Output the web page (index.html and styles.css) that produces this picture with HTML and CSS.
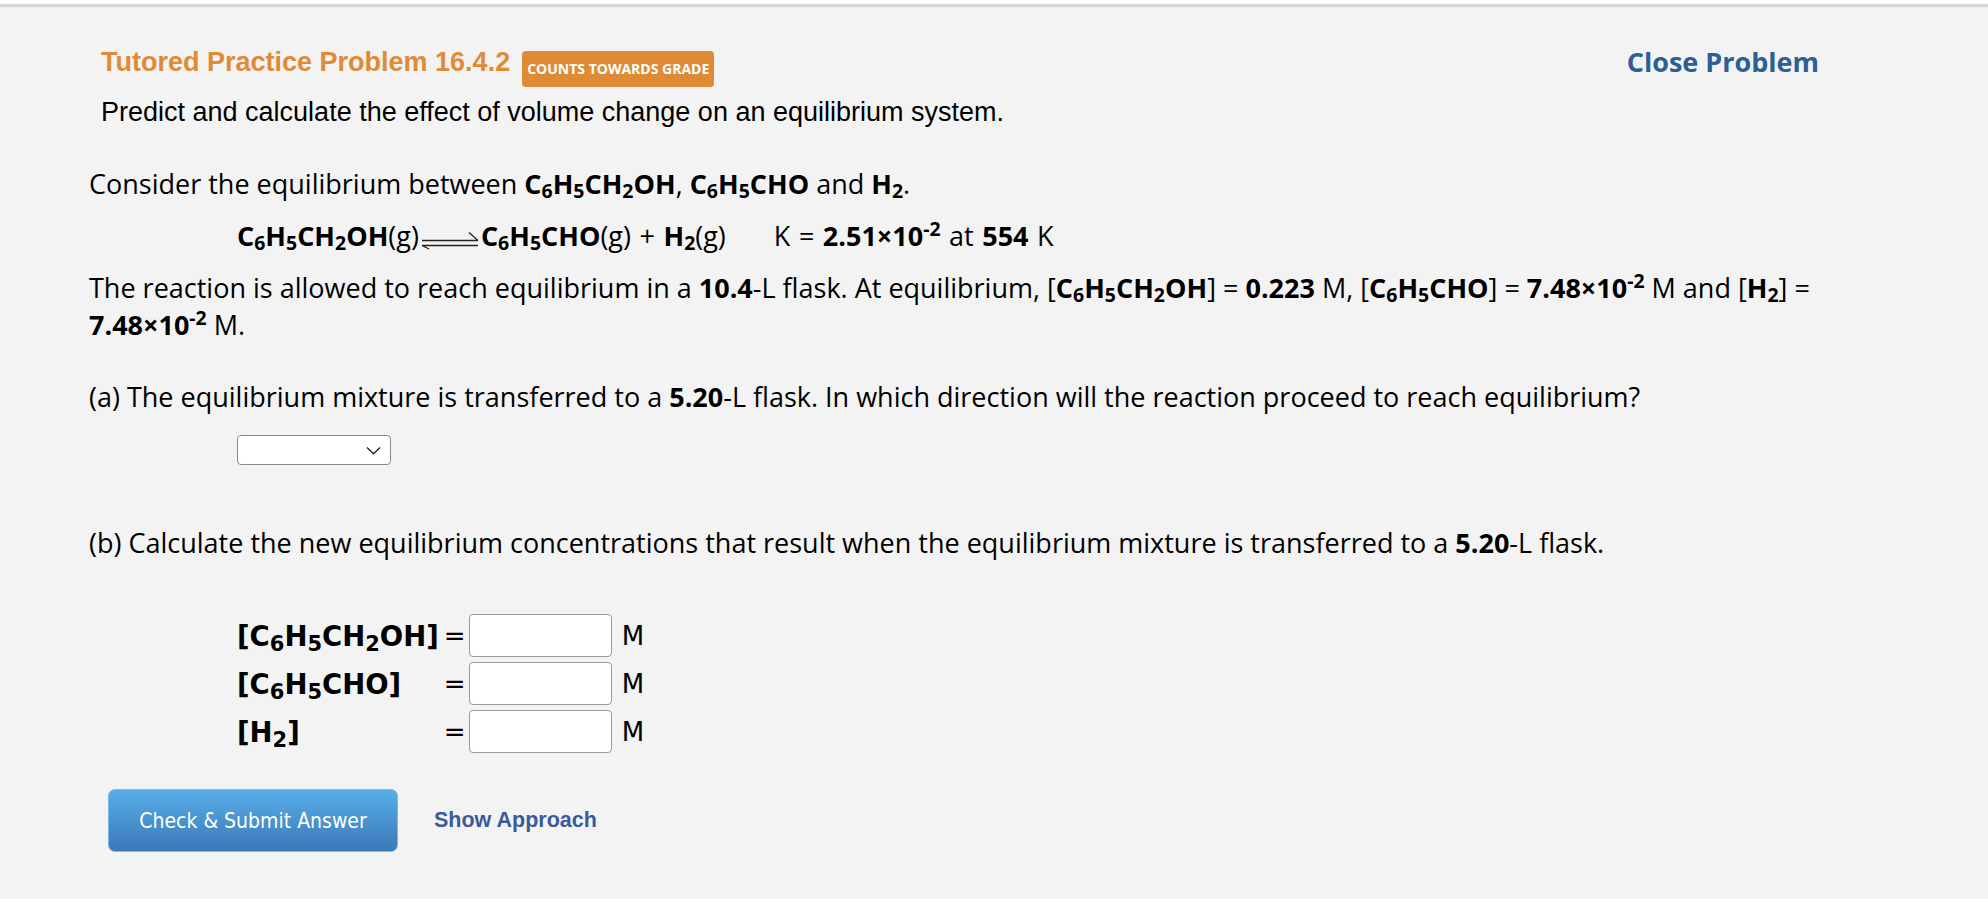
FILE: index.html
```html
<!DOCTYPE html>
<html lang="en">
<head>
<meta charset="utf-8">
<title>Tutored Practice Problem 16.4.2</title>
<link rel="stylesheet" href="styles.css">
</head>
<body>
<div class="page">
  <header class="head">
    <div class="head-left">
      <div class="title-row">
        <h1 class="title">Tutored Practice Problem 16.4.2</h1>
        <span class="badge">COUNTS TOWARDS GRADE</span>
      </div>
      <p class="subtitle">Predict and calculate the effect of volume change on an equilibrium system.</p>
    </div>
    <a class="close" href="#">Close Problem</a>
  </header>

  <main class="problem">
    <p class="text lead">Consider the equilibrium between <b>C<sub>6</sub>H<sub>5</sub>CH<sub>2</sub>OH</b>, <b>C<sub>6</sub>H<sub>5</sub>CHO</b> and <b>H<sub>2</sub></b>.</p>

    <p class="text eq"><b>C<sub>6</sub>H<sub>5</sub>CH<sub>2</sub>OH</b>(g)<svg class="arrow" width="60" height="20" viewBox="0 0 60 20" aria-hidden="true"><path d="M2 10.5H58M58 10.5L49 2.5M2 15.5H58M2 15.5L9 19" fill="none" stroke="#222" stroke-width="1.3"/></svg><b>C<sub>6</sub>H<sub>5</sub>CHO</b>(g) + <b>H<sub>2</sub></b>(g)<span class="k">K = <b>2.51×10<sup>-2</sup></b> at <b>554</b> K</span></p>

    <p class="text reaction">The reaction is allowed to reach equilibrium in a <b>10.4</b>-L flask. At equilibrium, [<b>C<sub>6</sub>H<sub>5</sub>CH<sub>2</sub>OH</b>] = <b>0.223</b> M, [<b>C<sub>6</sub>H<sub>5</sub>CHO</b>] = <b>7.48×10<sup>-2</sup></b> M and [<b>H<sub>2</sub></b>] = <b>7.48×10<sup>-2</sup></b> M.</p>

    <p class="text part-a">(a) The equilibrium mixture is transferred to a <b>5.20</b>-L flask. In which direction will the reaction proceed to reach equilibrium?</p>

    <div class="pick">
      <svg class="chev" width="15" height="9" viewBox="0 0 15 9" aria-hidden="true"><path d="M1 1.5L7.5 7.8L14 1.5" fill="none" stroke="#222" stroke-width="1.4"/></svg>
    </div>

    <p class="text part-b">(b) Calculate the new equilibrium concentrations that result when the equilibrium mixture is transferred to a <b>5.20</b>-L flask.</p>

    <div class="answers">
      <span class="lbl">[C<sub>6</sub>H<sub>5</sub>CH<sub>2</sub>OH]</span><span class="eqs">=</span><span class="box"></span><span class="unit">M</span>
      <span class="lbl">[C<sub>6</sub>H<sub>5</sub>CHO]</span><span class="eqs">=</span><span class="box"></span><span class="unit">M</span>
      <span class="lbl">[H<sub>2</sub>]</span><span class="eqs">=</span><span class="box"></span><span class="unit">M</span>
    </div>
  </main>

  <div class="actions">
    <button class="submit" type="button">Check &amp; Submit Answer</button>
    <a class="approach" href="#">Show Approach</a>
  </div>
</div>
</body>
</html>
```

FILE: styles.css
```css
html, body {
  margin: 0;
  padding: 0;
}

body {
  background: #ffffff;
  font-family: "Open Sans", "Liberation Sans", sans-serif;
  color: #000;
}

.page {
  margin-top: 4px;
  border-top: 3px solid #d6d6d6;
  background: #f3f3f3;
  min-height: 895px;
  box-sizing: border-box;
}

.head {
  display: flex;
  justify-content: space-between;
  align-items: flex-start;
  padding: 40px 169px 0 101px;
}

.title-row {
  display: flex;
  align-items: flex-start;
  gap: 12px;
}

.title {
  margin: 0;
  font: bold 27px/30px "Liberation Sans", Arial, sans-serif;
  color: #df8b35;
}

.badge {
  margin-top: 4px;
  height: 36px;
  padding: 0 5px;
  background: #df8b35;
  color: #fff;
  border-radius: 4px;
  font: 700 14px/36px "Open Sans", sans-serif;
  display: flex;
  align-items: center;
}

.subtitle {
  margin: 10px 0 0;
  font: 27px/30px "Liberation Sans", Arial, sans-serif;
}

.close {
  font: 700 27px/30px "Open Sans", sans-serif;
  color: #2b5f95;
  text-decoration: none;
}

.problem {
  padding: 38px 140px 0 89px;
}

.text {
  margin: 0;
  font-size: 27px;
  line-height: 37px;
}

.text b {
  font-weight: 700;
}

sub {
  font-size: 0.72em;
  line-height: 0;
  vertical-align: -0.22em;
}

sup {
  font-size: 0.72em;
  line-height: 0;
  vertical-align: 0.5em;
}

.eq {
  margin: 15px 0 0 148px;
  word-spacing: 1.5px;
}

.arrow {
  display: inline-block;
  vertical-align: -4px;
  margin: 0 1px;
}

.k {
  margin-left: 48px;
}

.reaction {
  margin-top: 15px;
}

.part-a {
  margin-top: 35px;
}

.pick {
  margin: 20px 0 0 148px;
  width: 154px;
  height: 30px;
  box-sizing: border-box;
  background: #fff;
  border: 1px solid #8a8a8a;
  border-radius: 4px;
  display: flex;
  align-items: center;
  justify-content: flex-end;
  padding-right: 9px;
}

.part-b {
  margin-top: 59px;
}

.answers {
  margin: 53px 0 0 148px;
  display: grid;
  grid-template-columns: auto auto 143px auto;
  justify-content: start;
  align-items: center;
  column-gap: 1px;
  row-gap: 5px;
  font-family: "DejaVu Sans", Verdana, sans-serif;
  font-size: 27.5px;
}

.lbl {
  font-weight: bold;
  line-height: 30px;
}

.lbl sub {
  font-size: 21px;
  vertical-align: -5px;
}

.eqs {
  padding: 0 2px 0 4px;
  font-size: 26px;
}

.box {
  height: 43px;
  box-sizing: border-box;
  background: #fff;
  border: 1px solid #9a9a9a;
  border-radius: 4px;
}

.unit {
  padding-left: 9px;
  font-size: 26px;
}

.actions {
  display: flex;
  align-items: center;
  gap: 36px;
  padding: 36px 0 0 108px;
}

.submit {
  width: 290px;
  height: 63px;
  border: 1px solid #7db7e6;
  border-radius: 7px;
  background: linear-gradient(#58aeea, #3a79b5);
  color: #fff;
  font: 21px "DejaVu Sans Condensed", "DejaVu Sans", sans-serif;
  font-stretch: condensed;
  cursor: pointer;
}

.approach {
  font: bold 21.5px "Liberation Sans", Arial, sans-serif;
  color: #3b5a9b;
  text-decoration: none;
}
```
